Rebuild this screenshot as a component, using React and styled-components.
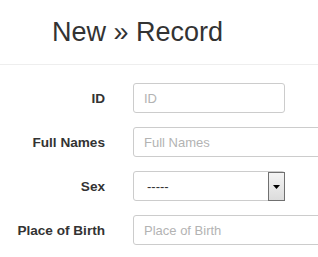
import styled, { createGlobalStyle } from "styled-components";

const GlobalStyle = createGlobalStyle`
  html, body {
    margin: 0;
    padding: 0;
    background: #fff;
    font-family: "Liberation Sans", Arial, sans-serif;
    color: #333;
  }
`;

const fields = [
  { id: "id", label: "ID", placeholder: "ID", width: "152px" },
  { id: "names", label: "Full Names", placeholder: "Full Names", width: "200px" },
  { id: "sex", label: "Sex", select: true, width: "152px" },
  { id: "birth", label: "Place of Birth", placeholder: "Place of Birth", width: "200px" },
];

const App = () => {
  return (
    <Page>
      <GlobalStyle />
      <Header>
        <Title>New » Record</Title>
      </Header>
      <Form>
        {fields.map((f) => (
          <Row key={f.id}>
            <Label htmlFor={f.id}>{f.label}</Label>
            {f.select ? (
              <SelectWrap $width={f.width}>
                <Select id={f.id} defaultValue="">
                  <option value="">-----</option>
                  <option value="m">Male</option>
                  <option value="f">Female</option>
                </Select>
                <ArrowButton>
                  <svg width="7" height="4" viewBox="0 0 7 4">
                    <path d="M0 0h7L3.5 4z" fill="#000" />
                  </svg>
                </ArrowButton>
              </SelectWrap>
            ) : (
              <Input id={f.id} placeholder={f.placeholder} $width={f.width} />
            )}
          </Row>
        ))}
      </Form>
    </Page>
  );
};

const Page = styled.div`
  width: 318px;
  overflow: hidden;
`;

const Header = styled.div`
  padding: 16px 0 0 52px;
  height: 48px;
  border-bottom: 1px solid #eee;
`;

const Title = styled.h2`
  margin: 0;
  font-size: 27px;
  font-weight: normal;
  line-height: 32px;
  color: #333;
`;

const Form = styled.div`
  padding-top: 18px;
  display: flex;
  flex-direction: column;
  gap: 14px;
`;

const Row = styled.div`
  display: grid;
  grid-template-columns: 105px auto;
  column-gap: 28px;
  align-items: center;
`;

const Label = styled.label`
  text-align: right;
  font-size: 13.6px;
  font-weight: bold;
  color: #333;
  white-space: nowrap;
`;

const Input = styled.input`
  box-sizing: border-box;
  width: ${(p) => p.$width};
  height: 30px;
  padding: 4px 10px;
  border: 1px solid #ccc;
  border-radius: 3px;
  font-family: inherit;
  font-size: 13px;
  color: #555;
  outline: none;
  &::placeholder {
    color: #b3b3b3;
  }
`;

const SelectWrap = styled.div`
  position: relative;
  width: ${(p) => p.$width};
  height: 30px;
`;

const Select = styled.select`
  box-sizing: border-box;
  width: 100%;
  height: 100%;
  padding: 4px 10px 4px 13px;
  border: 1px solid #ccc;
  border-radius: 3px;
  background: #fff;
  font-family: inherit;
  font-size: 13px;
  color: #333;
  appearance: none;
  outline: none;
`;

const ArrowButton = styled.span`
  position: absolute;
  top: 1px;
  right: 0;
  bottom: 0;
  width: 17px;
  box-sizing: border-box;
  border: 1px solid #707070;
  background: linear-gradient(#f4f4f4, #dcdcdc);
  display: flex;
  align-items: center;
  justify-content: center;
  pointer-events: none;
`;

export default App;
